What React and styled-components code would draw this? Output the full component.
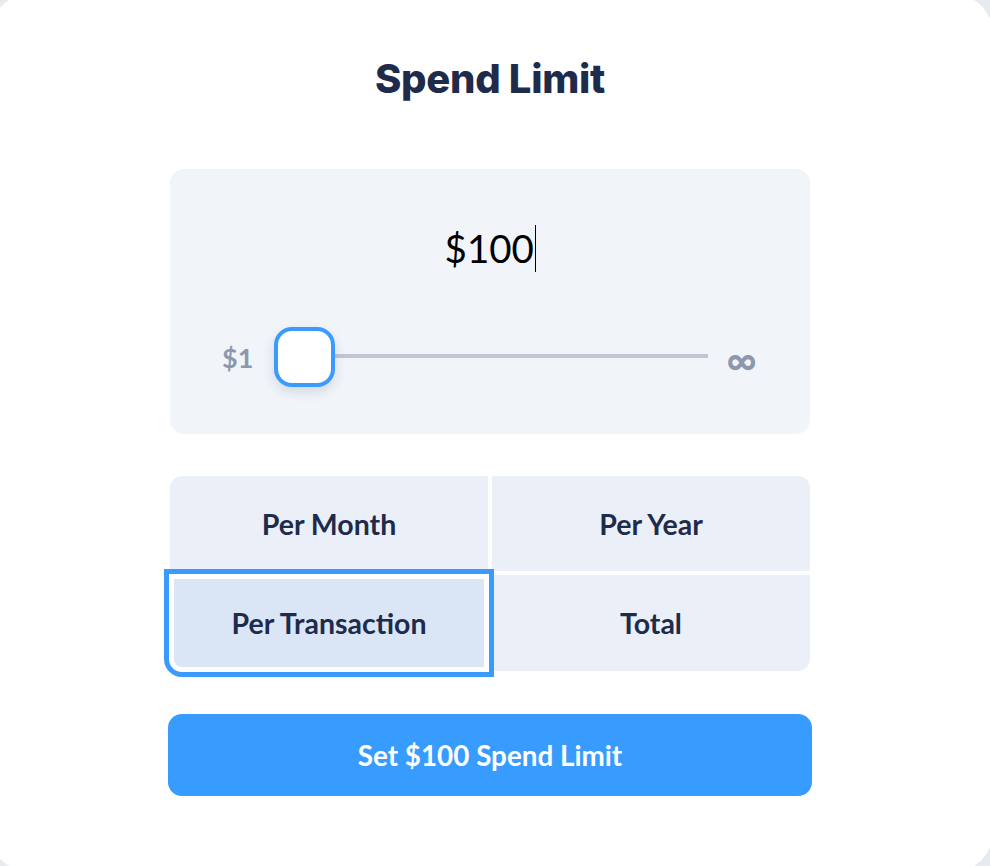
import React, { useState } from 'react';
import styled, { createGlobalStyle, css } from 'styled-components';

const GlobalStyle = createGlobalStyle`
  html, body {
    margin: 0;
    padding: 0;
    background: #e7eaef;
    overflow: hidden;
  }
  * {
    box-sizing: border-box;
  }
`;

const Card = styled.div`
  width: 1003px;
  height: 878px;
  margin: -6px 0 0 -10px;
  padding: 61px 13px 0 10px;
  background: #ffffff;
  border-radius: 40px;
  display: flex;
  flex-direction: column;
  align-items: center;
`;

const Title = styled.h1`
  margin: 0;
  font-family: Inter, 'Noto Sans', sans-serif;
  font-weight: 800;
  font-size: 40px;
  line-height: 48px;
  letter-spacing: -0.3px;
  color: #1f2b4b;
`;

const AmountPanel = styled.div`
  width: 640px;
  margin-top: 66px;
  padding: 56px 53px 47px 52px;
  background: #f1f5fa;
  border-radius: 14px;
  display: flex;
  flex-direction: column;
  align-items: center;
`;

const Amount = styled.div`
  font-family: Lato, 'Liberation Sans', sans-serif;
  font-size: 38.5px;
  line-height: 46px;
  color: #000000;
  display: flex;
  align-items: flex-start;
  padding-left: 2px;
`;

const Caret = styled.span`
  display: inline-block;
  width: 1.5px;
  height: 47px;
  margin-left: 1px;
  background: #000000;
`;

const SliderRow = styled.div`
  width: 100%;
  margin-top: 55px;
  display: flex;
  align-items: center;
`;

const EndLabel = styled.span`
  font-family: Lato, 'Liberation Sans', sans-serif;
  font-weight: 700;
  font-size: ${({ $size }) => $size || 27}px;
  line-height: 1;
  color: #8d98ad;
  ${({ $offset }) => $offset && css`margin-top: ${$offset}px;`}
`;

const Track = styled.div`
  flex: 1;
  height: 60px;
  margin: 0 18px 0 21px;
  display: flex;
  align-items: center;
`;

const Thumb = styled.div`
  width: 61px;
  height: 60px;
  flex-shrink: 0;
  background: #ffffff;
  border: 4px solid #3a9bfd;
  border-radius: 18px;
  box-shadow: 0 5px 12px rgba(30, 45, 80, 0.14);
  position: relative;
  z-index: 1;
`;

const Rail = styled.div`
  flex: 1;
  height: 4px;
  margin-top: -2px;
  background: #c0c6d3;
`;

const OptionsGrid = styled.div`
  width: 640px;
  margin-top: 42px;
  display: grid;
  grid-template-columns: 1fr 1fr;
  grid-template-rows: 95px 96px;
  gap: 4px;
`;

const cornerRadius = {
  tl: '12px 0 0 0',
  tr: '0 12px 0 0',
  bl: '0 0 0 12px',
  br: '0 0 12px 0',
};

const Option = styled.button`
  margin: 0;
  padding: 0;
  border: none;
  background: #ebf0f8;
  border-radius: ${({ $corner }) => cornerRadius[$corner]};
  font-family: Lato, 'Liberation Sans', sans-serif;
  font-weight: 700;
  font-size: 28.5px;
  color: #1f2b4b;
  cursor: pointer;
  position: relative;
  ${({ $active }) =>
    $active &&
    css`
      z-index: 1;
      background: #dae6f6;
      border: 4px solid #ffffff;
      box-shadow: 0 0 0 1px #ffffff, 0 0 0 6px #3a9bfd;
    `}
`;

const SubmitButton = styled.button`
  width: 644px;
  height: 82px;
  margin-top: 43px;
  border: none;
  border-radius: 14px;
  background: #389bfe;
  color: #ffffff;
  font-family: Lato, 'Liberation Sans', sans-serif;
  font-weight: 700;
  font-size: 27.8px;
  cursor: pointer;
`;

const options = [
  { id: 'month', label: 'Per Month', corner: 'tl' },
  { id: 'year', label: 'Per Year', corner: 'tr' },
  { id: 'transaction', label: 'Per Transaction', corner: 'bl' },
  { id: 'total', label: 'Total', corner: 'br' },
];

const App = () => {
  const [amount] = useState(100);
  const [period, setPeriod] = useState('transaction');

  return (
    <>
      <GlobalStyle />
      <Card>
        <Title>Spend Limit</Title>
        <AmountPanel>
          <Amount>
            ${amount}
            <Caret />
          </Amount>
          <SliderRow>
            <EndLabel>$1</EndLabel>
            <Track>
              <Thumb />
              <Rail />
            </Track>
            <EndLabel $size={42} $offset={4}>∞</EndLabel>
          </SliderRow>
        </AmountPanel>
        <OptionsGrid>
          {options.map(opt => (
            <Option
              key={opt.id}
              $corner={opt.corner}
              $active={period === opt.id}
              onClick={() => setPeriod(opt.id)}
            >
              {opt.label}
            </Option>
          ))}
        </OptionsGrid>
        <SubmitButton>Set ${amount} Spend Limit</SubmitButton>
      </Card>
    </>
  );
};

export default App;
